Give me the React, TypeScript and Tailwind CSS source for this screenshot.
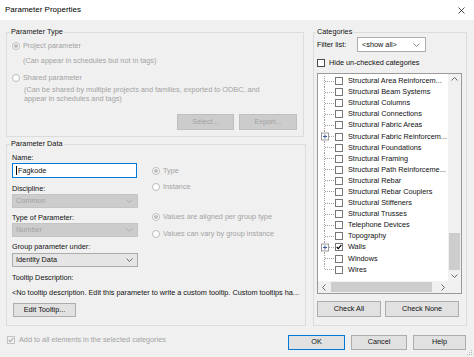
import React from "react";

const DIS = "text-[#a3a3a3]";

function Chevron({ up, color = "#5a5a5a" }: { up?: boolean; color?: string }) {
  return (
    <svg width="7" height="4" viewBox="0 0 7 4" className="shrink-0">
      <path
        d={up ? "M0.5 3.5L3.5 0.5L6.5 3.5" : "M0.5 0.5L3.5 3.5L6.5 0.5"}
        fill="none"
        stroke={color}
        strokeWidth="0.9"
      />
    </svg>
  );
}

function ChevronSide({ right }: { right?: boolean }) {
  return (
    <svg width="4" height="7" viewBox="0 0 4 7" className="shrink-0">
      <path
        d={right ? "M0.5 0.5L3.5 3.5L0.5 6.5" : "M3.5 0.5L0.5 3.5L3.5 6.5"}
        fill="none"
        stroke="#5a5a5a"
        strokeWidth="0.9"
      />
    </svg>
  );
}

function Radio({ checked, label }: { checked?: boolean; label: string }) {
  return (
    <div className="flex items-center h-[10px]">
      <span className="w-[8px] h-[8px] rounded-full border border-[#bcbcbc] bg-white flex items-center justify-center shrink-0">
        {checked && <span className="w-[4px] h-[4px] rounded-full bg-[#bdbdbd]" />}
      </span>
      <span className={`ml-[3px] leading-[10px] whitespace-nowrap ${DIS}`}>{label}</span>
    </div>
  );
}

function Btn({
  children,
  className = "",
  disabled,
  primary,
}: {
  children: React.ReactNode;
  className?: string;
  disabled?: boolean;
  primary?: boolean;
}) {
  return (
    <div
      className={`flex items-center justify-center border whitespace-nowrap ${
        disabled
          ? "bg-[#cccccc] border-[#bfbfbf] text-[#a3a3a3]"
          : primary
          ? "bg-[#e1e1e1] border-[#0078d7] text-[#111]"
          : "bg-[#e1e1e1] border-[#adadad] text-[#111]"
      } ${className}`}
    >
      {children}
    </div>
  );
}

function Combo({ text, disabled }: { text: string; disabled?: boolean }) {
  return (
    <div
      className={`flex items-center justify-between border h-[14px] w-[126px] pl-[3px] pr-[4px] ${
        disabled
          ? "bg-[#cccccc] border-[#c4c4c4] text-[#a3a3a3]"
          : "bg-[#e5e5e5] border-[#acacac] text-[#111]"
      }`}
    >
      <span className="leading-[10px]">{text}</span>
      <Chevron color={disabled ? "#a8a8a8" : "#5a5a5a"} />
    </div>
  );
}

function Check({ checked, dark }: { checked?: boolean; dark?: boolean }) {
  return (
    <span
      className={`w-[8px] h-[8px] border bg-white flex items-center justify-center shrink-0 ${
        dark ? "border-[#4a4a4a]" : "border-[#777777]"
      }`}
    >
      {checked && (
        <svg width="6" height="6" viewBox="0 0 6 6">
          <path d="M0.7 3L2.3 4.7L5.4 0.9" fill="none" stroke="#000" strokeWidth="1.2" />
        </svg>
      )}
    </span>
  );
}

function Tree({ plus, last }: { plus?: boolean; last?: boolean }) {
  return (
    <svg width="17" height="11.1" viewBox="0 0 17 11.1" className="shrink-0">
      <line
        x1="6.5"
        y1="0"
        x2="6.5"
        y2={last ? 5.5 : 11.1}
        stroke="#a0a0a0"
        strokeDasharray="1 1"
      />
      <line x1="7" y1="5.5" x2="17" y2="5.5" stroke="#a0a0a0" strokeDasharray="1 1" />
      {plus && (
        <>
          <rect x="3.5" y="2" width="7" height="7" fill="#fff" stroke="#9a9a9a" />
          <line x1="5" y1="5.5" x2="9" y2="5.5" stroke="#3a5a9a" />
          <line x1="7" y1="3.5" x2="7" y2="7.5" stroke="#3a5a9a" />
        </>
      )}
    </svg>
  );
}

const cats: { name: string; checked?: boolean; plus?: boolean }[] = [
  { name: "Structural Area Reinforcem..." },
  { name: "Structural Beam Systems" },
  { name: "Structural Columns" },
  { name: "Structural Connections" },
  { name: "Structural Fabric Areas" },
  { name: "Structural Fabric Reinforcem...", plus: true },
  { name: "Structural Foundations" },
  { name: "Structural Framing" },
  { name: "Structural Path Reinforceme..." },
  { name: "Structural Rebar" },
  { name: "Structural Rebar Couplers" },
  { name: "Structural Stiffeners" },
  { name: "Structural Trusses" },
  { name: "Telephone Devices" },
  { name: "Topography" },
  { name: "Walls", checked: true, plus: true },
  { name: "Windows" },
  { name: "Wires" },
];

export default function App() {
  return (
    <div className="relative w-[474px] h-[357px] overflow-hidden bg-[#f0f0f0] flex flex-col font-['Liberation_Sans',Arial,sans-serif] text-[7.3px] text-[#111]">
      {/* Title bar */}
      <div className="h-[20px] bg-white flex items-center justify-between pl-[5px] pr-[9px] shrink-0">
        <span className="text-[8px] text-black">Parameter Properties</span>
        <svg width="7" height="7" viewBox="0 0 7 7">
          <path d="M0.5 0.5L6.5 6.5M6.5 0.5L0.5 6.5" stroke="#222" strokeWidth="0.8" />
        </svg>
      </div>

      {/* Body */}
      <div className="flex pt-[7px] pl-[6px] pr-[7px] gap-[9px]">
        {/* Left column */}
        <div className="w-[298px] flex flex-col">
          <fieldset className="h-[110px] border border-[#dcdcdc]">
            <legend className="ml-[3px] px-[1px] leading-[10px] text-[#111]">Parameter Type</legend>
            <div className="flex flex-col pl-[5px] pr-[6px]">
              <div className="mt-[4px]">
                <Radio checked label="Project parameter" />
              </div>
              <div className={`mt-[5px] pl-[11px] leading-[9px] ${DIS}`}>
                (Can appear in schedules but not in tags)
              </div>
              <div className="mt-[8px]">
                <Radio label="Shared parameter" />
              </div>
              <div className={`mt-[2px] pl-[12px] leading-[9px] ${DIS}`}>
                (Can be shared by multiple projects and families, exported to ODBC, and
                <br />
                appear in schedules and tags)
              </div>
              <div className="mt-[11px] flex justify-end gap-[5px]">
                <Btn disabled className="w-[57px] h-[16px]">
                  Select...
                </Btn>
                <Btn disabled className="w-[58px] h-[16px]">
                  Export...
                </Btn>
              </div>
            </div>
          </fieldset>

          <fieldset className="mt-[2px] h-[187px] border border-[#dcdcdc]">
            <legend className="ml-[3px] px-[1px] leading-[10px] text-[#111]">Parameter Data</legend>
            <div className="flex flex-col pl-[5px] pr-[6px]">
              <div className="flex">
                <div className="w-[126px] flex flex-col">
                  <div className="mt-[4px] leading-[9px]">Name:</div>
                  <div className="mt-[1px] h-[15px] w-[125px] border border-[#0078d7] bg-white flex items-center pl-[3px]">
                    <span className="w-px h-[9px] bg-black mr-[1px]" />
                    <span className="leading-[10px]">Fagkode</span>
                  </div>
                  <div className="mt-[6px] leading-[9px]">Discipline:</div>
                  <div className="mt-[1px]">
                    <Combo disabled text="Common" />
                  </div>
                  <div className="mt-[5px] leading-[9px]">Type of Parameter:</div>
                  <div className="mt-[1px]">
                    <Combo disabled text="Number" />
                  </div>
                  <div className="mt-[5px] leading-[9px]">Group parameter under:</div>
                  <div className="mt-[2px]">
                    <Combo text="Identity Data" />
                  </div>
                </div>
                <div className="ml-[14px] flex flex-col">
                  <div className="mt-[17px]">
                    <Radio checked label="Type" />
                  </div>
                  <div className="mt-[6px]">
                    <Radio label="Instance" />
                  </div>
                  <div className="mt-[20px]">
                    <Radio checked label="Values are aligned per group type" />
                  </div>
                  <div className="mt-[7px]">
                    <Radio label="Values can vary by group instance" />
                  </div>
                </div>
              </div>
              <div className="mt-[6px] leading-[9px]">Tooltip Description:</div>
              <div className="mt-[6px] leading-[9px] whitespace-nowrap">
                &lt;No tooltip description. Edit this parameter to write a custom tooltip. Custom tooltips ha...
              </div>
              <div className="mt-[6px] flex pl-[1px]">
                <Btn className="w-[63px] h-[14px]">Edit Tooltip...</Btn>
              </div>
            </div>
          </fieldset>
        </div>

        {/* Right column */}
        <fieldset className="w-[154px] h-[299px] border border-[#dcdcdc]">
          <legend className="ml-[2px] px-[1px] leading-[10px] text-[#111]">Categories</legend>
          <div className="flex flex-col pl-[3px]">
            <div className="flex items-center h-[15px]">
              <span className="w-[40px] leading-[10px]">Filter list:</span>
              <div className="w-[69px] h-[15px] border border-[#acacac] bg-white flex items-center justify-between pl-[4px] pr-[5px]">
                <span className="leading-[10px]">&lt;show all&gt;</span>
                <Chevron color="#7a7a7a" />
              </div>
            </div>
            <div className="mt-[6px] flex items-center h-[9px]">
              <Check dark />
              <span className="ml-[4px] leading-[9px]">Hide un-checked categories</span>
            </div>

            {/* Tree list */}
            <div className="mt-[6px] w-[145px] h-[221px] border border-[#9a9a9a] bg-white flex flex-col">
              <div className="flex h-[207px]">
                <div className="flex-1 flex flex-col pt-[1.5px] overflow-hidden">
                  {cats.map((c, i) => (
                    <div key={c.name} className="flex items-center h-[11.1px] shrink-0">
                      <Tree plus={c.plus} last={i === cats.length - 1} />
                      <Check checked={c.checked} />
                      <span className="ml-[5px] leading-[10px] whitespace-nowrap">{c.name}</span>
                    </div>
                  ))}
                </div>
                <div className="w-[13px] bg-[#f0f0f0] flex flex-col">
                  <div className="h-[10px] flex items-center justify-center">
                    <Chevron up />
                  </div>
                  <div className="flex-1 flex flex-col justify-end pb-[1px] px-[1px]">
                    <div className="h-[37px] bg-[#cdcdcd]" />
                  </div>
                  <div className="h-[10px] flex items-center justify-center">
                    <Chevron />
                  </div>
                </div>
              </div>
              <div className="flex h-[12px]">
                <div className="flex-1 bg-[#f0f0f0] flex items-center">
                  <div className="w-[11px] flex justify-center">
                    <ChevronSide />
                  </div>
                  <div className="flex-1 h-full flex items-center py-[1px] pl-[2px] pr-[5px]">
                    <div className="h-full w-full bg-[#cdcdcd]" />
                  </div>
                  <div className="w-[11px] flex justify-center">
                    <ChevronSide right />
                  </div>
                </div>
                <div className="w-[13px] bg-[#f0f0f0]" />
              </div>
            </div>

            <div className="mt-[7px] flex gap-[4px]">
              <Btn className="w-[64px] h-[16px]">Check All</Btn>
              <Btn className="w-[74px] h-[16px]">Check None</Btn>
            </div>
          </div>
        </fieldset>
      </div>

      {/* Bottom row */}
      <div className="flex justify-between pl-[7px] pr-[8px] pt-[9px]">
        <div className="flex items-center h-[9px]">
          <span className="w-[8px] h-[8px] border border-[#c4c4c4] bg-[#f0f0f0] flex items-center justify-center">
            <svg width="6" height="6" viewBox="0 0 6 6">
              <path d="M0.7 3L2.3 4.7L5.4 0.9" fill="none" stroke="#b0b0b0" strokeWidth="1.1" />
            </svg>
          </span>
          <span className={`ml-[4px] leading-[9px] ${DIS}`}>
            Add to all elements in the selected categories
          </span>
        </div>
        <div className="flex gap-[6px]">
          <Btn primary className="w-[57px] h-[15px]">
            OK
          </Btn>
          <Btn className="w-[56px] h-[15px]">Cancel</Btn>
          <Btn className="w-[53px] h-[15px]">Help</Btn>
        </div>
      </div>

      {/* resize grip */}
      <svg width="7" height="7" viewBox="0 0 7 7" className="absolute right-[1px] bottom-[1px]">
        <rect x="5" y="1" width="1" height="1" fill="#b5b5b5" />
        <rect x="3" y="3" width="1" height="1" fill="#b5b5b5" />
        <rect x="5" y="3" width="1" height="1" fill="#b5b5b5" />
        <rect x="1" y="5" width="1" height="1" fill="#b5b5b5" />
        <rect x="3" y="5" width="1" height="1" fill="#b5b5b5" />
        <rect x="5" y="5" width="1" height="1" fill="#b5b5b5" />
      </svg>
    </div>
  );
}
